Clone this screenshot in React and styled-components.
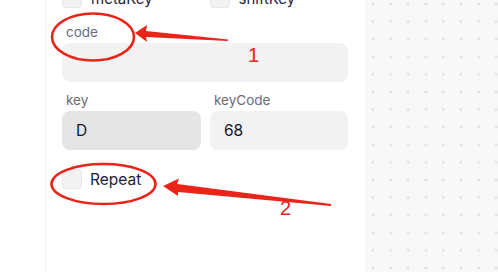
import React from "react";
import styled, { createGlobalStyle } from "styled-components";

const GlobalStyle = createGlobalStyle`
  html, body {
    margin: 0;
    padding: 0;
    background: #ffffff;
    font-family: Inter, "Noto Sans", sans-serif;
  }
`;

export default function App() {
  return (
    <>
      <GlobalStyle />
      <Page>
        <SideStrip />
        <Panel>
          <PanelInner>
            <CheckRow>
              <CheckItem>
                <Box />
                <CheckText>metaKey</CheckText>
              </CheckItem>
              <CheckItem>
                <Box />
                <CheckText>shiftKey</CheckText>
              </CheckItem>
            </CheckRow>

            <CodeField>
              <Label>code</Label>
              <Input />
            </CodeField>

            <TwoCols>
              <Field>
                <Label>key</Label>
                <Input disabled>D</Input>
              </Field>
              <Field>
                <Label>keyCode</Label>
                <Input>68</Input>
              </Field>
            </TwoCols>

            <RepeatRow>
              <Box />
              <RepeatText>Repeat</RepeatText>
            </RepeatRow>
          </PanelInner>
        </Panel>
        <Canvas>
          <svg width="100%" height="100%">
            <defs>
              <pattern
                id="plus"
                x="5"
                y="1"
                width="17.6"
                height="17.6"
                patternUnits="userSpaceOnUse"
              >
                <path d="M1.5 3h3M3 1.5v3" stroke="#d9d9d9" strokeWidth="1" />
              </pattern>
            </defs>
            <rect width="100%" height="100%" fill="url(#plus)" />
          </svg>
        </Canvas>

        {/* 截图上的红色标注 */}
        <Marks viewBox="0 0 498 272">
          <ellipse cx="93" cy="37" rx="41" ry="23.5" fill="none" stroke="#ea2418" strokeWidth="2.6" />
          <polygon
            points="135,33 147,25 146,31 228,39.5 228,41 146,37 147,42"
            fill="#ea2418"
          />
          <text x="248" y="62" fill="#ea2418" fontSize="20" fontFamily="Liberation Sans, sans-serif">1</text>

          <ellipse cx="103.5" cy="184" rx="52" ry="20" fill="none" stroke="#ea2418" strokeWidth="2.6" />
          <polygon
            points="163,186 179,178.5 177,184 331,204 331,206 178,192 178,196"
            fill="#ea2418"
          />
          <text x="280" y="215" fill="#ea2418" fontSize="20" fontFamily="Liberation Sans, sans-serif">2</text>
        </Marks>
      </Page>
    </>
  );
}

const Page = styled.div`
  position: relative;
  display: flex;
  width: 498px;
  height: 272px;
  overflow: hidden;
  background: #ffffff;
`;

const SideStrip = styled.div`
  width: 45px;
  flex-shrink: 0;
  border-right: 1px solid #efefef;
`;

const Panel = styled.div`
  width: 319px;
  flex-shrink: 0;
  box-sizing: border-box;
  padding: 0 17px 0 16px;
  overflow: hidden;
`;

const PanelInner = styled.div`
  margin-top: -12px;
  display: flex;
  flex-direction: column;
`;

const CheckRow = styled.div`
  display: grid;
  grid-template-columns: 1fr 1fr;
  gap: 9px;
`;

const CheckItem = styled.label`
  display: flex;
  align-items: center;
  gap: 9px;
  height: 20px;
`;

const Box = styled.span`
  display: block;
  width: 20px;
  height: 20px;
  box-sizing: border-box;
  border: 1px solid #e6e6e6;
  border-radius: 4px;
  background: #f2f2f2;
  flex-shrink: 0;
`;

const CheckText = styled.span`
  font-size: 15px;
  color: #1d1d3a;
`;

const Field = styled.div`
  display: flex;
  flex-direction: column;
`;

const CodeField = styled(Field)`
  margin-top: 16px;
`;

const Label = styled.div`
  padding-left: 4px;
  font-size: 13.5px;
  line-height: 16px;
  color: #6a6a78;
`;

const Input = styled.div`
  margin-top: 3px;
  height: 39px;
  box-sizing: border-box;
  border-radius: 8px;
  background: ${(p) => (p.disabled ? "#e5e5e5" : "#f2f2f2")};
  padding-left: 14px;
  display: flex;
  align-items: center;
  font-size: 15.5px;
  color: #16162a;
`;

const TwoCols = styled.div`
  display: grid;
  grid-template-columns: 139px 1fr;
  gap: 9px;
  margin-top: 10px;
`;

const RepeatRow = styled.label`
  display: flex;
  align-items: center;
  gap: 8px;
  margin-top: 19px;
  height: 20px;
`;

const RepeatText = styled.span`
  font-size: 15.5px;
  color: #1d1d3a;
`;

const Canvas = styled.div`
  flex: 1;
  background: #f8f8f8;
  svg {
    display: block;
  }
`;

const Marks = styled.svg`
  position: absolute;
  left: 0;
  top: 0;
  width: 498px;
  height: 272px;
  pointer-events: none;
`;
